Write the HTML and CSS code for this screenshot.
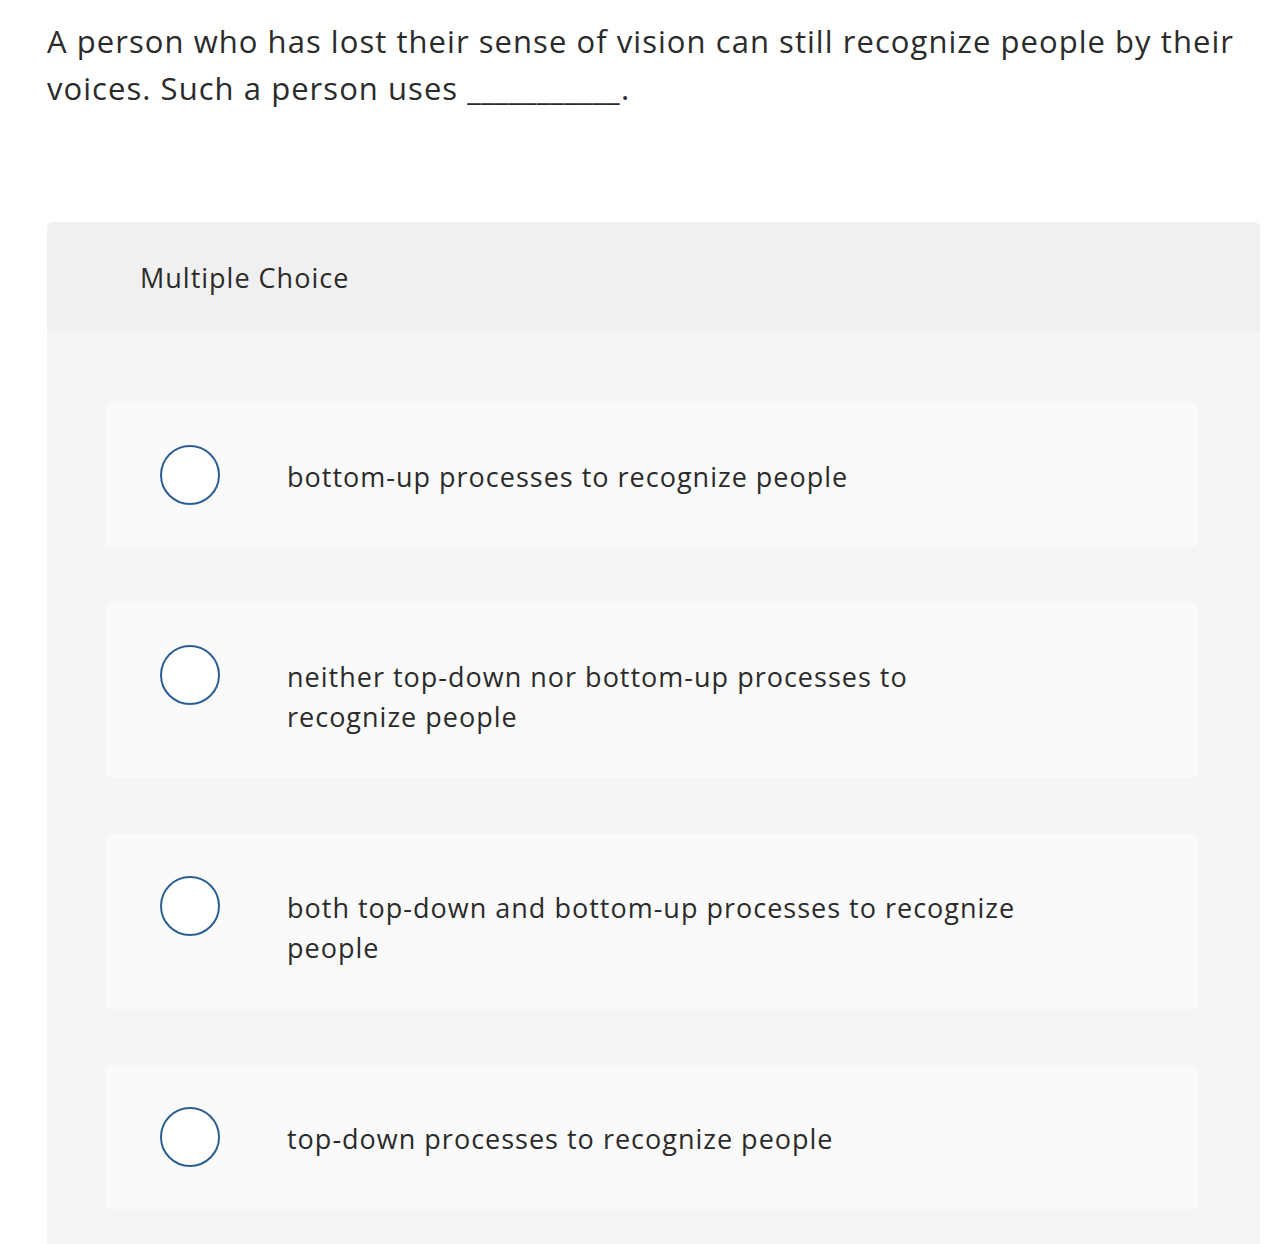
FILE: index.html
```html
<!DOCTYPE html>
<html lang="en">
<head>
<meta charset="utf-8">
<title>Multiple Choice</title>
<link rel="stylesheet" href="styles.css">
</head>
<body>
<main class="page">
  <p class="question">A person who has lost their sense of vision can still recognize people by their voices. Such a person uses <span class="blank">___________</span>.</p>
  <section class="card">
    <header class="card-head">Multiple Choice</header>
    <div class="card-body">
      <label class="option"><span class="radio"></span><span class="option-text">bottom-up processes to recognize people</span></label>
      <label class="option"><span class="radio"></span><span class="option-text">neither top-down nor bottom-up processes to recognize people</span></label>
      <label class="option"><span class="radio"></span><span class="option-text">both top-down and bottom-up processes to recognize people</span></label>
      <label class="option"><span class="radio"></span><span class="option-text">top-down processes to recognize people</span></label>
    </div>
  </section>
</main>
</body>
</html>
```

FILE: styles.css
```css
html, body {
  margin: 0;
  padding: 0;
  background: #ffffff;
}
body {
  font-family: "Open Sans", "Lato", sans-serif;
  color: #2b2b2b;
}
.page {
  padding: 18px 20px 0 47px;
}
.question {
  margin: 0;
  font-size: 31px;
  letter-spacing: 1.05px;
  line-height: 47px;
}
.blank {
  letter-spacing: 0.3px;
  margin-right: 1px;
}
.card {
  margin-top: 110px;
  margin-right: 7px;
  border-radius: 6px 6px 0 0;
  overflow: hidden;
  background: #f5f5f5;
}
.card-head {
  background: #f0f0f0;
  height: 110px;
  display: flex;
  align-items: center;
  padding-left: 93px;
  font-size: 27px;
  letter-spacing: 1px;
}
.card-body {
  padding: 71px 62px 60px 58px;
  display: flex;
  flex-direction: column;
  gap: 56px;
}
.option {
  display: flex;
  align-items: flex-start;
  padding: 42px 0 41px 55px;
  background: #fafafa;
  border-radius: 6px;
}
.radio {
  flex: none;
  width: 60px;
  height: 60px;
  margin-bottom: 1px;
  box-sizing: border-box;
  border: 2px solid #2b5f94;
  border-radius: 50%;
  background: #ffffff;
}
.option-text {
  margin-left: 67px;
  margin-top: 12px;
  max-width: 740px;
  font-size: 27px;
  letter-spacing: 1px;
  line-height: 40px;
}
```
